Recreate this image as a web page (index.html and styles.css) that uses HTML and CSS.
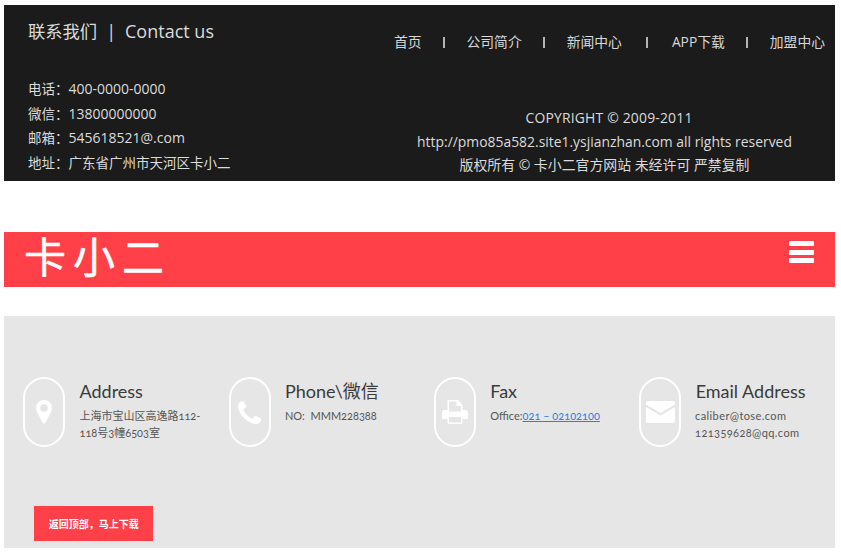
FILE: index.html
```html
<!DOCTYPE html>
<html lang="zh">
<head>
<meta charset="utf-8">
<title>卡小二</title>
<link rel="stylesheet" href="styles.css">
</head>
<body>
<div class="page">
  <footer class="dark">
    <div class="dark-top">
      <h2 class="dark-title"><span class="title-cn">联系我们</span><span class="title-sep">|</span>Contact us</h2>
      <nav class="top-nav">
        <a>首页</a><i class="nav-sep"><b></b></i>
        <a>公司简介</a><i class="nav-sep"><b></b></i>
        <a>新闻中心</a><i class="nav-sep nav-sep-wide"><b></b></i>
        <a>APP下载</a><i class="nav-sep"><b></b></i>
        <a>加盟中心</a>
      </nav>
    </div>
    <div class="dark-bottom">
      <ul class="contact-lines">
        <li>电话：<span class="num">400-0000-0000</span></li>
        <li>微信：<span class="num">13800000000</span></li>
        <li>邮箱：<span class="num">545618521@.com</span></li>
        <li>地址：广东省广州市天河区卡小二</li>
      </ul>
      <div class="copyright">
        <p class="copy-first">COPYRIGHT © 2009-2011</p>
        <p>http://pmo85a582.site1.ysjianzhan.com all rights reserved</p>
        <p>版权所有 © 卡小二官方网站 未经许可 严禁复制</p>
      </div>
    </div>
  </footer>

  <header class="brand-bar">
    <div class="logo">卡小二</div>
    <div class="burger"><span></span><span></span><span></span></div>
  </header>

  <section class="contact">
    <div class="cards">
      <article class="card">
        <div class="pill">
          <svg class="ico" width="16" height="24" viewBox="0 0 16 24"><path fill-rule="evenodd" d="M8 0a8 8 0 0 1 8 8c0 1.800-.5 3-1.100 4.300L9.200 22.900a1.400 1.400 0 0 1-2.400 0L1.100 12.300C.5 11 0 9.800 0 8a8 8 0 0 1 8-8zm0 4.200a3.800 3.800 0 1 0 0 7.600 3.800 3.800 0 0 0 0-7.600z"/></svg>
        </div>
        <div class="info">
          <h3>Address</h3>
          <p>上海市宝山区高逸路112-118号3幢6503室</p>
        </div>
      </article>
      <article class="card">
        <div class="pill">
          <svg class="ico" width="23" height="23" viewBox="0 0 1408 1408"><path d="M1408 1112q0 27-10 70.500t-21 68.500q-21 50-122 106-94 51-186 51-27 0-53-3.500t-57.500-12.500-47-14.500-55.500-20.500-49-18q-98-35-175-83-127-79-264-216t-216-264q-48-77-83-175-3-9-18-49t-20.500-55.500-14.500-47-12.500-57.500-3.500-53q0-92 51-186 56-101 106-122 25-11 68.500-21t70.500-10q14 0 21 3 18 6 53 76 11 19 30 54t35 63.500 31 53.500q3 4 17.500 25t21.500 35.500 7 28.500q0 20-28.500 50t-62 55-62 53-28.500 46q0 9 5 22.500t8.500 20.500 14 24 11.500 19q76 137 174 235t235 174q2 1 19 11.500t24 14 20.500 8.500 22.500 5q18 0 46-28.500t53-62 55-62 50-28.500q14 0 28.500 7t35.500 21.500 25 17.500q25 15 53.500 31t63.500 35 54 30q70 35 76 53 3 7 3 21z"/></svg>
        </div>
        <div class="info">
          <h3>Phone\微信</h3>
          <p>NO:&nbsp; MMM228388</p>
        </div>
      </article>
      <article class="card">
        <div class="pill">
          <svg class="ico" width="26" height="24" viewBox="0 0 26 24"><path fill-rule="evenodd" d="M5.500 0H16l4.500 4.500V10h3A2.500 2.500 0 0 1 26 12.500V18a1 1 0 0 1-1 1h-4.500v3.500a1.500 1.500 0 0 1-1.500 1.500H7a1.500 1.500 0 0 1-1.500-1.500V19H1a1 1 0 0 1-1-1v-5.500A2.500 2.500 0 0 1 2.500 10h3zM7 1.500V11.500h12V6h-4.500V1.500zM7 17v5.500h12V17z"/></svg>
        </div>
        <div class="info">
          <h3>Fax</h3>
          <p>Office:<a class="link">021 – 02102100</a></p>
        </div>
      </article>
      <article class="card">
        <div class="pill">
          <svg class="ico" width="29" height="22" viewBox="0 0 29 22"><path d="M2 0h25a2 2 0 0 1 2 2v1.500L14.500 12 0 3.500V2a2 2 0 0 1 2-2z"/><path d="M0 6l14.500 8.500L29 6v14a2 2 0 0 1-2 2H2a2 2 0 0 1-2-2z"/></svg>
        </div>
        <div class="info">
          <h3>Email Address</h3>
          <p class="mail">caliber@tose.com<br>121359628@qq.com</p>
        </div>
      </article>
    </div>
    <a class="cta">返回顶部，马上下载</a>
  </section>
</div>
</body>
</html>
```

FILE: styles.css
```css
* { box-sizing: border-box; }
html, body { margin: 0; padding: 0; background: #fff; }
body { font-family: "Open Sans", "Noto Sans CJK SC", sans-serif; }
h2, h3, p, ul { margin: 0; padding: 0; list-style: none; font-weight: 400; }

.page { width: 841px; height: 553px; padding: 5px 6px 0 4px; overflow: hidden; }

/* dark footer block */
.dark { background: #1b1b1b; color: #dcdcdc; height: 176px; padding: 0 10px 0 24px; }
.dark-top { display: flex; justify-content: space-between; height: 68px; }
.dark-title { font-size: 18px; line-height: 24px; padding-top: 14px; color: #dcdcdc; white-space: nowrap; }
.title-cn { font-size: 17.300px; }
.title-sep { margin: 0 9px; }
.top-nav { display: flex; align-items: center; font-size: 13.800px; line-height: 18px; padding-top: 28px; height: 46px; color: #d8d8d8; white-space: nowrap; }
.nav-sep { width: 45px; flex: none; display: flex; justify-content: center; }
.nav-sep b { display: block; width: 2px; height: 11px; background: #b4b4b4; }
.nav-sep-wide { width: 50px; }
.dark-bottom { display: flex; }
.contact-lines { width: 330px; font-size: 13.500px; line-height: 24.600px; flex: none; padding-top: 4px; white-space: nowrap; }
.num { font-size: 14px; }
.copyright { width: 450px; margin-left: 26px; padding-top: 33px; text-align: center; font-size: 13.900px; line-height: 23.600px; white-space: nowrap; }
.copy-first { letter-spacing: .2px; padding-left: 9px; }

/* red brand bar */
.brand-bar { margin-top: 51px; height: 55px; background: #ff4049; display: flex; justify-content: space-between; padding: 0 21px 0 20px; color: #fff; }
.logo { font-size: 42px; line-height: 46px; letter-spacing: 7px; font-family: "Noto Sans CJK SC", sans-serif; font-weight: 400; -webkit-text-stroke: .5px #fff; }
.burger { display: flex; flex-direction: column; gap: 3.500px; width: 25px; padding-top: 9px; }
.burger span { display: block; height: 5px; background: #fff; border-radius: 1px; }

/* contact section */
.contact { margin-top: 29px; height: 232px; background: #e6e6e6; padding: 61px 0 0 19.200px; }
.cards { display: grid; grid-template-columns: repeat(4, 205.400px); }
.card { display: flex; gap: 14.300px; height: 70px; }
.pill { width: 42px; height: 70px; flex: none; border: 2px solid #fff; border-radius: 21px; display: flex; align-items: center; justify-content: center; }
.ico { fill: #fff; display: block; }
.info { padding-top: 3px; color: #555; }
.info h3 { font-family: "Lato", "Noto Sans CJK SC", sans-serif; font-size: 18px; line-height: 22px; color: #3a3a3a; white-space: nowrap; }
.info p { font-family: "Lato", "Noto Sans CJK SC", sans-serif; font-feature-settings: "onum"; font-size: 11px; line-height: 16.500px; margin-top: 6px; width: 125px; }
.info .mail { letter-spacing: .4px; margin-left: -.6px; }
.link { color: #2f7de1; text-decoration: underline; }
.cta { display: block; width: 119px; height: 35px; margin: 59px 0 0 11px; background: #ff4049; color: #fff; font-size: 10px; font-weight: 700; line-height: 35px; text-align: center; font-family: "Noto Sans CJK SC", sans-serif; }
```
